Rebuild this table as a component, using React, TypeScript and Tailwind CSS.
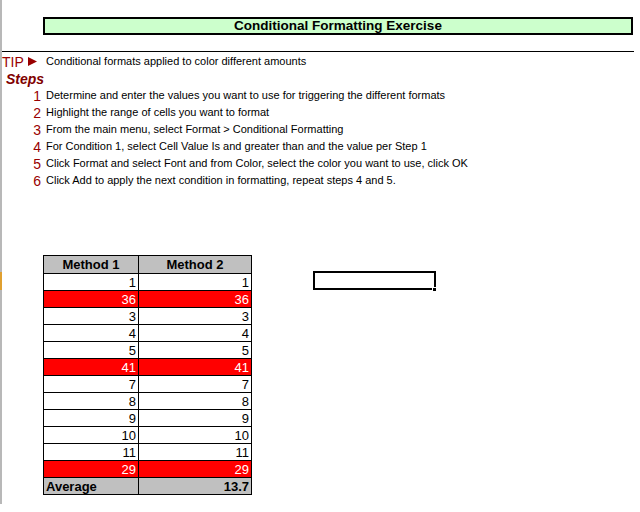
import React from "react";

const steps = [
  "Determine and enter the values you want to use for triggering the different formats",
  "Highlight the range of cells you want to format",
  "From the main menu, select Format > Conditional Formatting",
  "For Condition 1, select Cell Value Is and greater than and the value per Step 1",
  "Click Format and select Font and from Color, select the color you want to use, click OK",
  "Click Add to apply the next condition in formatting, repeat steps 4 and 5.",
];

const values = [1, 36, 3, 4, 5, 41, 7, 8, 9, 10, 11, 29];

export default function App() {
  return (
    <div className="relative h-[512px] w-[640px] overflow-hidden bg-white font-['Liberation_Sans',Arial,sans-serif] text-black">
      <div className="h-[504px] border-l-2 border-[#b8b8b8]">
        {/* Title */}
        <div className="pt-[17px] pl-[41px]">
          <div className="flex h-[18px] w-[590px] items-center justify-center border-2 border-black bg-[#ccffcc] text-[13.5px] font-bold leading-none">
            Conditional Formatting Exercise
          </div>
        </div>

        <div className="mt-[16px] h-px w-[632px] bg-black" />

        {/* Tip + steps */}
        <div className="mt-px">
          <div className="flex h-[17px] items-center">
            <span className="w-[26px] text-[14px] leading-none text-[#990000]">TIP</span>
            <span className="flex w-[18px] items-center">
              <svg width="9" height="9" viewBox="0 0 9 9">
                <polygon points="0,0 9,4.5 0,9" fill="#990000" />
              </svg>
            </span>
            <span className="text-[11px] leading-none">Conditional formats applied to color different amounts</span>
          </div>
          <div className="flex h-[17px] items-center pl-[4px]">
            <span className="text-[14px] font-bold italic leading-none text-[#800000]">Steps</span>
          </div>
          {steps.map((s, i) => (
            <div key={i} className="flex h-[17px] items-center">
              <span className="w-[39px] text-right text-[14px] leading-none text-[#990000]">{i + 1}</span>
              <span className="pl-[5px] text-[11px] leading-none">{s}</span>
            </div>
          ))}
        </div>

        {/* Table */}
        <div className="mt-[66px] pl-[41px]">
          <div className="w-[209px] border border-black text-[13px] leading-none">
            <div className="flex h-[17px] bg-[#c0c0c0] font-bold">
              <div className="flex w-[95px] items-center justify-center border-r border-black">Method 1</div>
              <div className="flex flex-1 items-center justify-center">Method 2</div>
            </div>
            {values.map((v, i) => {
              const hot = v > 20;
              return (
                <div
                  key={i}
                  className={`flex h-[17px] border-t border-black ${hot ? "bg-[#ff0000] text-white" : "bg-white text-black"}`}
                >
                  <div className="flex w-[95px] items-center justify-end border-r border-black pr-[2px]">{v}</div>
                  <div className="flex flex-1 items-center justify-end pr-[2px]">{v}</div>
                </div>
              );
            })}
            <div className="flex h-[17px] border-t border-black bg-[#c0c0c0] font-bold">
              <div className="flex w-[95px] items-center border-r border-black pl-[2px]">Average</div>
              <div className="flex flex-1 items-center justify-end pr-[2px]">13.7</div>
            </div>
          </div>
        </div>
      </div>

      {/* Row marker on the left edge */}
      <div className="absolute left-0 top-[272px] h-[18px] w-[2px] bg-[#e0a030]" />

      {/* Active cell */}
      <div className="absolute left-[313px] top-[271px] h-[19px] w-[123px] border-2 border-black" />
      <div className="absolute left-[432px] top-[287px] h-[5px] w-[5px] border border-white bg-black" />
    </div>
  );
}
